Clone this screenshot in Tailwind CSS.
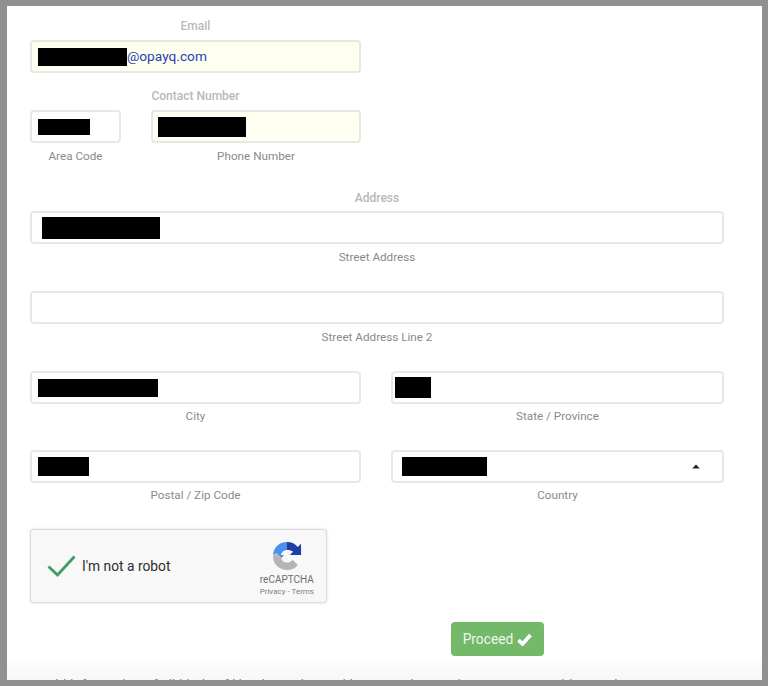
<!DOCTYPE html>
<html lang="en">
<head>
    <meta charset="UTF-8">
    <title>Contact form</title>
    <script src="https://cdn.jsdelivr.net/npm/@tailwindcss/browser@4"></script>
</head>
<body class="w-[768px] h-[686px] overflow-hidden bg-[#909090] font-['Roboto',sans-serif]">
    <div class="relative mt-[6px] ml-[7px] w-[755px] h-[674px] overflow-hidden bg-white pl-[23px] pr-[38px]">

        <!-- Email -->
        <div class="w-[331px]">
            <div class="h-[34px] pt-[13px] text-center text-[12px] leading-[14px] font-medium text-[#b8b8b8]">Email</div>
            <div class="flex items-center h-[33px] pl-[6px] rounded-[4px] border-2 border-[#e8e8e2] bg-[#fefff0] text-[13.7px] text-[#2b3fb0]">
                <span class="w-[89px] h-[18px] bg-black"></span><span>@opayq.com</span>
            </div>
        </div>

        <!-- Contact number -->
        <div class="w-[331px] mt-[14px]">
            <div class="h-[23px] text-center text-[12px] leading-[18px] font-medium text-[#b8b8b8]">Contact Number</div>
            <div class="flex gap-[30px]">
                <div class="w-[91px]">
                    <div class="flex items-center h-[33px] pl-[6px] rounded-[4px] border-2 border-[#e8e8e8] bg-white">
                        <span class="w-[52px] h-[16px] bg-black"></span>
                    </div>
                    <div class="mt-[6px] text-center text-[11.7px] leading-[14px] text-[#8a8a8a]">Area Code</div>
                </div>
                <div class="w-[210px]">
                    <div class="flex items-center h-[33px] pl-[5px] rounded-[4px] border-2 border-[#e8e8e2] bg-[#fefff0]">
                        <span class="w-[88px] h-[20px] bg-black"></span>
                    </div>
                    <div class="mt-[6px] text-center text-[11.7px] leading-[14px] text-[#8a8a8a]">Phone Number</div>
                </div>
            </div>
        </div>

        <!-- Address -->
        <div class="mt-[28px] text-center text-[12px] leading-[14px] font-medium text-[#b8b8b8]">Address</div>
        <div class="flex items-center h-[33px] mt-[6px] pl-[10px] rounded-[4px] border-2 border-[#e8e8e8]">
            <span class="w-[118px] h-[22px] bg-black"></span>
        </div>
        <div class="mt-[6px] text-center text-[11.7px] leading-[14px] text-[#8a8a8a]">Street Address</div>

        <div class="h-[33px] mt-[27px] rounded-[4px] border-2 border-[#e8e8e8]"></div>
        <div class="mt-[6px] text-center text-[11.7px] leading-[14px] text-[#8a8a8a]">Street Address Line 2</div>

        <!-- City / state / zip / country -->
        <div class="grid grid-cols-[331px_333px] gap-x-[30px] gap-y-[27px] mt-[27px]">
            <div>
                <div class="flex items-center h-[33px] pl-[6px] rounded-[4px] border-2 border-[#e8e8e8]">
                    <span class="w-[120px] h-[18px] bg-black"></span>
                </div>
                <div class="mt-[5px] text-center text-[11.7px] leading-[14px] text-[#8a8a8a]">City</div>
            </div>
            <div>
                <div class="flex items-center h-[33px] pl-[2px] rounded-[4px] border-2 border-[#e8e8e8]">
                    <span class="w-[36px] h-[21px] bg-black"></span>
                </div>
                <div class="mt-[5px] text-center text-[11.7px] leading-[14px] text-[#8a8a8a]">State / Province</div>
            </div>
            <div>
                <div class="flex items-center h-[33px] pl-[6px] rounded-[4px] border-2 border-[#e8e8e8]">
                    <span class="w-[51px] h-[19px] bg-black"></span>
                </div>
                <div class="mt-[5px] text-center text-[11.7px] leading-[14px] text-[#8a8a8a]">Postal / Zip Code</div>
            </div>
            <div>
                <div class="flex items-center justify-between h-[33px] pl-[9px] pr-[22px] rounded-[4px] border-2 border-[#e8e8e8]">
                    <span class="w-[85px] h-[19px] bg-black"></span>
                    <svg width="8" height="5" viewBox="0 0 8 5"><path d="M4 0.5 L7.8 4.5 H0.2 Z" fill="#222"/></svg>
                </div>
                <div class="mt-[5px] text-center text-[11.7px] leading-[14px] text-[#8a8a8a]">Country</div>
            </div>
        </div>

        <!-- reCAPTCHA -->
        <div class="flex items-center justify-between w-[297px] h-[74px] mt-[27px] pl-[16px] pr-[12px] rounded-[3px] border border-[#dcdcdc] bg-[#f8f8f8] shadow-[0_0_3px_rgba(0,0,0,0.12)]">
            <div class="flex items-center gap-[6px]">
                <svg width="29" height="22" viewBox="0 0 29 22"><path d="M1.5 11.5 L10.5 20 L27.5 1.5" fill="none" stroke="#3f9d63" stroke-width="2.8"/></svg>
                <span class="text-[13.8px] text-[#2e2e2e]">I'm not a robot</span>
            </div>
            <div class="flex flex-col items-center self-start pt-[11px]">
                <svg width="30" height="30" viewBox="0 0 32 32">
                    <path d="M1 15 C2 6 8 1 16 1 L16 9.5 C12.5 9.5 10 12 9.5 15 L13 15 L10 18 L5 13 Z" fill="#4a90ee"/>
                    <path d="M16 1 C21 1 25 3 27.5 6.5 L31 3 V15 H19 L22.5 11.5 C21 10 19 9.5 16 9.5 Z" fill="#1f3fa8"/>
                    <path d="M1 16 L5 13 L10 18 L9.5 17 C10 20.5 12.5 23 16 23 C18.5 23 20.5 22 22 20 L27.5 25.5 C25 29 21 31 16 31 C8 31 1 25 1 16 Z" fill="#b5b5b5"/>
                </svg>
                <span class="mt-[3px] text-[10px] leading-[12px] text-[#6f6f6f]">reCAPTCHA</span>
                <span class="text-[8px] leading-[11px] text-[#7d7d7d]">Privacy - Terms</span>
            </div>
        </div>

        <!-- Proceed -->
        <button class="relative z-10 flex items-center justify-center gap-[4px] w-[93px] h-[34px] mt-[19px] ml-[421px] rounded-[4px] bg-[#74b86a] text-[13.8px] text-[#eef7ec]">
            Proceed
            <svg width="15" height="13" viewBox="0 0 15 13"><path d="M1.5 7 L5.5 11 L13.5 2" fill="none" stroke="white" stroke-width="3.8"/></svg>
        </button>

        <!-- fade over the cut-off text below the form -->
        <div class="absolute left-0 right-0 bottom-0 h-[25px] bg-gradient-to-b from-white to-[#f7f7f7]"></div>
        <p class="absolute left-[20px] top-[670px] w-[720px] h-[4px] overflow-hidden whitespace-nowrap text-[14px] leading-[18px] text-[#888]">to add Info mation of all kinds of Header and postal because that stating your name add want that</p>
    </div>
</body>
</html>
